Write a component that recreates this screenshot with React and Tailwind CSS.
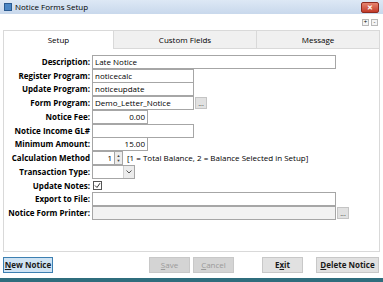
import React from 'react';

const font = { fontFamily: '"Segoe UI", "Open Sans", "Liberation Sans", sans-serif' };

const Row = ({ label, children }) => (
  <div className="flex items-center h-[13.75px]">
    <div className="w-[88px] pr-[2px] text-right font-bold text-[8px] leading-none text-black whitespace-nowrap">
      {label}
    </div>
    <div className="flex items-center h-full">{children}</div>
  </div>
);

const Box = ({ w, children, right, gray }) => (
  <div
    className={`h-[14px] border border-[#a6a6a6] flex items-center px-[2px] text-[8px] leading-none text-black ${right ? 'justify-end' : ''} ${gray ? 'bg-[#f2f2f2]' : 'bg-white'}`}
    style={{ width: w }}
  >
    {children}
  </div>
);

const Dots = () => (
  <div className="w-[12px] h-[12px] ml-[1px] bg-[#e1e1e1] border border-[#c4c4c4] flex items-end justify-center text-[7px] leading-[8px] text-[#333]">
    ...
  </div>
);

const Btn = ({ children, w, disabled, active }) => (
  <button
    className={`h-[16px] text-[8px] font-bold leading-none flex items-center justify-center border ${
      active
        ? 'border-[#3c7fb1] bg-[#cfe3f3] text-[#1a1a1a]'
        : disabled
        ? 'border-[#c8c8c8] bg-[#d4d4d4] text-[#9a9a9a] font-normal'
        : 'border-[#c8c8c8] bg-[#e1e1e1] text-[#1a1a1a]'
    }`}
    style={{ width: w }}
  >
    {children}
  </button>
);

export default function App() {
  return (
    <div className="w-[383px] h-[282px] bg-white flex flex-col overflow-hidden" style={font}>
      {/* title bar */}
      <div className="h-[14px] bg-gradient-to-b from-[#dde8f5] to-[#c8d8ec] flex items-center px-[4px] shrink-0">
        <div className="w-[8px] h-[8px] bg-[#4a86c5] border border-[#2a5a90] mr-[3px]" />
        <span className="text-[8px] leading-none text-black">Notice Forms Setup</span>
        <div className="ml-auto w-[18px] h-[11px] bg-gradient-to-b from-[#e6836f] to-[#c2392a] border border-[#8e2a20] rounded-[2px] flex items-center justify-center text-white text-[7px] font-bold leading-none">
          ✕
        </div>
      </div>

      {/* small buttons */}
      <div className="h-[16px] flex items-center justify-end gap-[2px] pr-[5px] shrink-0">
        <div className="w-[7px] h-[7px] border border-[#b8b8b8] bg-[#f4f4f4] flex items-center justify-center text-[6px] leading-none">+</div>
        <div className="w-[7px] h-[7px] border border-[#b8b8b8] bg-[#f4f4f4] flex items-center justify-center text-[6px] leading-none">-</div>
      </div>

      {/* tabs */}
      <div className="flex mx-[3px] h-[19px] shrink-0">
        <div className="w-[111px] bg-white border-t border-l border-r border-[#d9d9d9] flex items-center justify-center text-[8px] text-black">
          Setup
        </div>
        <div className="w-[143px] bg-[#f0f0f0] border-t border-r border-b border-[#d9d9d9] flex items-center justify-center text-[8px] text-black">
          Custom Fields
        </div>
        <div className="flex-1 bg-[#f0f0f0] border-t border-r border-b border-[#d9d9d9] flex items-center justify-center text-[8px] text-black">
          Message
        </div>
      </div>

      {/* panel */}
      <div className="mx-[3px] h-[203px] border-l border-r border-b border-[#d9d9d9] bg-white pt-[6px] shrink-0">
        <Row label="Description:"><Box w={244}>Late Notice</Box></Row>
        <Row label="Register Program:"><Box w={102}>noticecalc</Box></Row>
        <Row label="Update Program:"><Box w={102}>noticeupdate</Box></Row>
        <Row label="Form Program:"><Box w={102}>Demo_Letter_Notice</Box><Dots /></Row>
        <Row label="Notice Fee:"><Box w={56} right>0.00</Box></Row>
        <Row label="Notice Income GL#"><Box w={102}></Box></Row>
        <Row label="Minimum Amount:"><Box w={56} right>15.00</Box></Row>
        <Row label="Calculation Method">
          <Box w={23} right>1</Box>
          <div className="w-[8px] h-[14px] border border-[#a6a6a6] border-l-0 bg-[#ececec] flex flex-col items-center justify-center text-[4px] leading-[5px] text-[#444]">
            <span>▲</span><span>▼</span>
          </div>
          <span className="ml-[4px] text-[8px] leading-none text-black whitespace-nowrap">[1 = Total Balance, 2 = Balance Selected in Setup]</span>
        </Row>
        <Row label="Transaction Type:">
          <div className="w-[43px] h-[14px] border border-[#a6a6a6] bg-white flex justify-end">
            <div className="w-[11px] h-full bg-[#ececec] border-l border-[#d0d0d0] flex items-center justify-center">
              <svg width="6" height="4" viewBox="0 0 6 4"><path d="M0.5 0.5 L3 3 L5.5 0.5" fill="none" stroke="#555" strokeWidth="1" /></svg>
            </div>
          </div>
        </Row>
        <Row label="Update Notes:">
          <div className="ml-[1px] w-[9px] h-[9px] border border-[#555] bg-white flex items-center justify-center">
            <svg width="7" height="7" viewBox="0 0 7 7"><path d="M1 3.5 L3 5.5 L6 1.2" fill="none" stroke="#333" strokeWidth="1" /></svg>
          </div>
        </Row>
        <Row label="Export to File:"><Box w={244}></Box></Row>
        <Row label="Notice Form Printer:"><Box w={244} gray></Box><Dots /></Row>
      </div>

      {/* buttons */}
      <div className="flex items-center h-[26px] px-[3px] shrink-0">
        <Btn w={50} active><span className="underline decoration-[0.5px]">N</span>ew Notice</Btn>
        <div className="w-[96px]" />
        <Btn w={41} disabled><span className="underline">S</span>ave</Btn>
        <div className="w-[3px]" />
        <Btn w={41} disabled><span className="underline">C</span>ancel</Btn>
        <div className="w-[28px]" />
        <Btn w={41}>E<span className="underline">x</span>it</Btn>
        <div className="w-[13px]" />
        <Btn w={63}><span className="underline">D</span>elete Notice</Btn>
      </div>

      <div className="flex-1 bg-[#2f6d7d]" />
    </div>
  );
}
